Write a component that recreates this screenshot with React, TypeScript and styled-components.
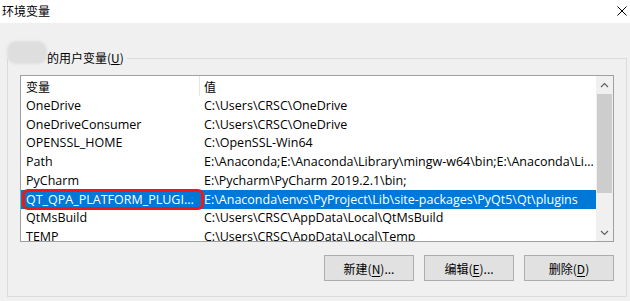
import React from "react";
import styled, { createGlobalStyle } from "styled-components";

const Global = createGlobalStyle`
  html, body { margin: 0; padding: 0; background: #f0f0f0; }
  body {
    font-family: "Open Sans", "Noto Sans CJK SC", sans-serif;
    font-size: 12px;
    color: #000;
    width: 630px;
    height: 301px;
    overflow: hidden;
  }
`;

const Window = styled.div`
  width: 630px;
  height: 301px;
  display: flex;
  flex-direction: column;
  background: #f0f0f0;
`;

const TitleBar = styled.div`
  height: 23px;
  flex: none;
  background: #ffffff;
  display: flex;
  align-items: center;
  justify-content: space-between;
  padding: 0 3px 0 2px;
`;

const Title = styled.span`
  font-family: "Noto Sans CJK SC", sans-serif;
  font-size: 12px;
  line-height: 16px;
  margin-top: -2px;
`;

const CloseBtn = styled.span`
  width: 10px;
  height: 10px;
  display: flex;
  margin-top: -1px;
`;

const Body = styled.div`
  flex: 1;
  padding: 35px 0 0 7px;
`;

const GroupBox = styled.div`
  width: 620px;
  box-sizing: border-box;
  border: 1px solid #dcdcdc;
  padding: 0 0 15px 0;
`;

const Legend = styled.div`
  display: flex;
  align-items: flex-end;
  margin: -18px 0 0 -1px;
  height: 24px;
`;

const Redaction = styled.div`
  width: 40px;
  height: 23px;
  margin-bottom: 1px;
  border-radius: 9px;
  background: #dedede;
  filter: blur(1px);
`;

const LegendText = styled.span`
  background: #f0f0f0;
  font-family: "Noto Sans CJK SC", sans-serif;
  line-height: 16px;
  padding-right: 3px;
  margin-bottom: -1px;
`;

const Inner = styled.div`
  margin: 10px 0 0 12px;
  width: 594px;
`;

const ListBox = styled.div`
  height: 167px;
  box-sizing: border-box;
  border: 1px solid #a0a0a0;
  background: #ffffff;
  display: flex;
  overflow: hidden;
`;

const Rows = styled.div`
  flex: 1;
  display: flex;
  flex-direction: column;
  min-width: 0;
`;

const Row = styled.div<{ $header?: boolean; $selected?: boolean }>`
  position: relative;
  flex: none;
  height: ${(p) => (p.$header ? "20px" : "18.75px")};
  display: grid;
  grid-template-columns: 178px 1fr;
  align-items: center;
  background: ${(p) => (p.$selected ? "#0078d7" : "transparent")};
  color: ${(p) => (p.$selected ? "#ffffff" : "#000000")};
`;

const Cell = styled.div<{ $value?: boolean; $header?: boolean }>`
  height: 100%;
  display: flex;
  align-items: center;
  white-space: nowrap;
  overflow: hidden;
  padding-left: ${(p) => (p.$value ? "4px" : "5px")};
  border-left: ${(p) =>
    p.$value ? (p.$header ? "1px solid #e5e5e5" : "1px solid transparent") : "none"};
  font-family: ${(p) =>
    p.$header ? '"Noto Sans CJK SC", sans-serif' : '"Open Sans", "Noto Sans CJK SC", sans-serif'};
  font-size: ${(p) => (p.$header ? "12px" : "12.5px")};
  line-height: 16px;
  padding-top: 1px;
  box-sizing: border-box;
`;

const Highlight = styled.div`
  position: absolute;
  left: 1px;
  top: -1px;
  width: 182px;
  height: 21px;
  box-sizing: border-box;
  border: 3px solid #f21717;
  border-radius: 6px;
`;

const ScrollBar = styled.div`
  width: 17px;
  flex: none;
  background: #f0f0f0;
  display: flex;
  flex-direction: column;
`;

const ScrollArrow = styled.div`
  height: 17px;
  flex: none;
  display: flex;
  align-items: center;
  justify-content: center;
`;

const Track = styled.div`
  flex: 1;
  display: flex;
  flex-direction: column;
  padding: 1px 1px 0 1px;
`;

const Thumb = styled.div`
  height: 99px;
  background: #cdcdcd;
`;

const Buttons = styled.div`
  display: flex;
  justify-content: flex-end;
  gap: 10px;
  margin-top: 13px;
`;

const Button = styled.div`
  width: 90px;
  height: 26px;
  box-sizing: border-box;
  border: 1px solid #adadad;
  background: #e1e1e1;
  display: flex;
  align-items: center;
  justify-content: center;
  font-family: "Noto Sans CJK SC", sans-serif;
  font-size: 12px;
  color: #000;
  u { text-decoration: underline; text-underline-offset: 2px; }
`;

const Chevron = ({ up }: { up?: boolean }) => (
  <svg width="9" height="6" viewBox="0 0 9 6">
    <path
      d={up ? "M1 5 L4.5 1.5 L8 5" : "M1 1 L4.5 4.5 L8 1"}
      fill="none"
      stroke="#606060"
      strokeWidth="1.2"
    />
  </svg>
);

const rows: [string, string][] = [
  ["OneDrive", "C:\\Users\\CRSC\\OneDrive"],
  ["OneDriveConsumer", "C:\\Users\\CRSC\\OneDrive"],
  ["OPENSSL_HOME", "C:\\OpenSSL-Win64"],
  ["Path", "E:\\Anaconda;E:\\Anaconda\\Library\\mingw-w64\\bin;E:\\Anaconda\\Li..."],
  ["PyCharm", "E:\\Pycharm\\PyCharm 2019.2.1\\bin;"],
  ["QT_QPA_PLATFORM_PLUGI...", "E:\\Anaconda\\envs\\PyProject\\Lib\\site-packages\\PyQt5\\Qt\\plugins"],
  ["QtMsBuild", "C:\\Users\\CRSC\\AppData\\Local\\QtMsBuild"],
  ["TEMP", "C:\\Users\\CRSC\\AppData\\Local\\Temp"],
];

export default function App() {
  return (
    <>
      <Global />
      <Window>
        <TitleBar>
          <Title>环境变量</Title>
          <CloseBtn>
            <svg width="10" height="10" viewBox="0 0 10 10">
              <path d="M0.5 0.5 L9.5 9.5 M9.5 0.5 L0.5 9.5" stroke="#000" strokeWidth="1" />
            </svg>
          </CloseBtn>
        </TitleBar>
        <Body>
          <GroupBox>
            <Legend>
              <Redaction />
              <LegendText>的用户变量(<u>U</u>)</LegendText>
            </Legend>
            <Inner>
              <ListBox>
                <Rows>
                  <Row $header>
                    <Cell $header>变量</Cell>
                    <Cell $header $value>值</Cell>
                  </Row>
                  {rows.map(([name, value], i) => {
                    const selected = i === 5;
                    return (
                      <Row key={name} $selected={selected}>
                        <Cell>{name}</Cell>
                        <Cell $value>{value}</Cell>
                        {selected && <Highlight />}
                      </Row>
                    );
                  })}
                </Rows>
                <ScrollBar>
                  <ScrollArrow>
                    <Chevron up />
                  </ScrollArrow>
                  <Track>
                    <Thumb />
                  </Track>
                  <ScrollArrow>
                    <Chevron />
                  </ScrollArrow>
                </ScrollBar>
              </ListBox>
              <Buttons>
                <Button>新建(<u>N</u>)...</Button>
                <Button>编辑(<u>E</u>)...</Button>
                <Button>删除(<u>D</u>)</Button>
              </Buttons>
            </Inner>
          </GroupBox>
        </Body>
      </Window>
    </>
  );
}
